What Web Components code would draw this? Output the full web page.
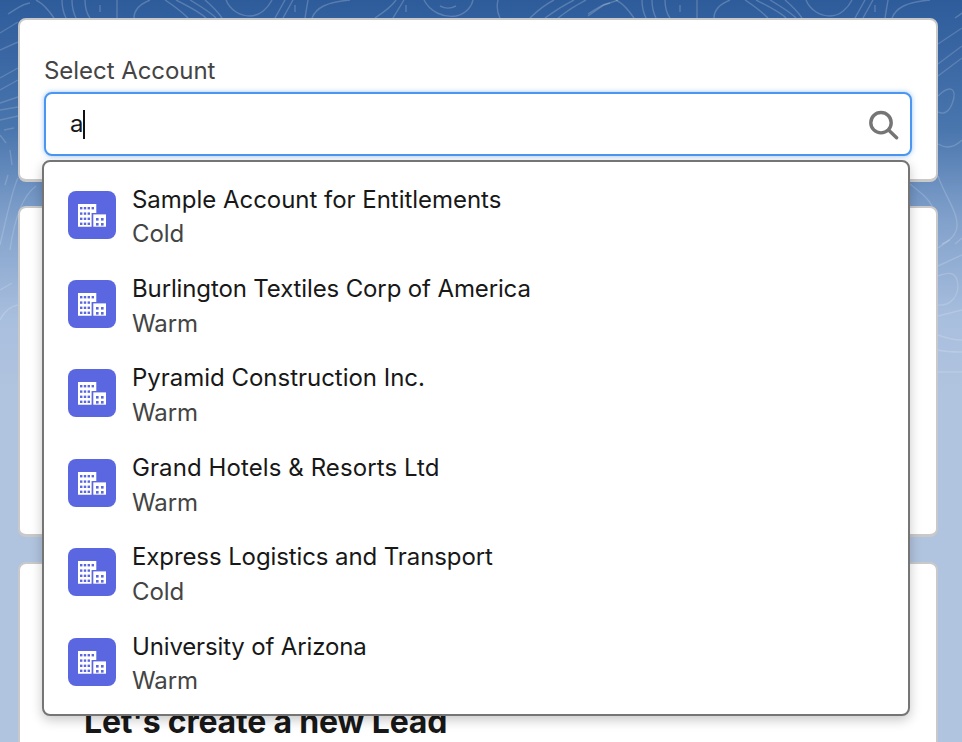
<!DOCTYPE html>
<html lang="en">
<head>
<meta charset="utf-8">
<title>Select Account</title>
<style>
  html, body { margin: 0; height: 100%; overflow: hidden; }
  body { font-family: Inter, "Liberation Sans", sans-serif; }
</style>
</head>
<body>
<app-page>
  <form-card style="height:159px">
    <account-lookup label="Select Account" value="a">
      <account-option style="--track:-.03px" name="Sample Account for Entitlements" rating="Cold"></account-option>
      <account-option style="--track:-.13px" name="Burlington Textiles Corp of America" rating="Warm"></account-option>
      <account-option style="--track:-.02px" name="Pyramid Construction Inc." rating="Warm"></account-option>
      <account-option style="--track:.09px" name="Grand Hotels &amp; Resorts Ltd" rating="Warm"></account-option>
      <account-option style="--track:-.1px" name="Express Logistics and Transport" rating="Cold"></account-option>
      <account-option style="--track:-.15px" name="University of Arizona" rating="Warm"></account-option>
    </account-lookup>
  </form-card>
  <form-card style="height:326px"></form-card>
  <form-card style="height:200px;margin-top:1px">
    <lead-heading>Let's create a new Lead</lead-heading>
  </form-card>
</app-page>

<script>
// fondo de la pagina con lineas de contorno
class AppPage extends HTMLElement {
  constructor() {
    super();
    this.attachShadow({ mode: 'open' });
    this.shadowRoot.innerHTML = `
      <style>
        :host {
          display: block;
          position: relative;
          height: 742px;
          overflow: hidden;
          background: linear-gradient(180deg, #2e5c9b 0, #4a76ae 130px, #7f9fca 215px, #a9bfde 320px, #b1c4df 400px);
        }
        .lines { position: absolute; left: 0; top: 0; }
        .stack {
          position: relative;
          display: flex;
          flex-direction: column;
          gap: 24px;
          padding: 18px 24px 0 18px;
        }
      </style>
      <svg class="lines" width="962" height="420" viewBox="0 0 962 420" fill="none" stroke="#fff" stroke-opacity=".2" stroke-width="1.4">
        <defs>
          <g id="tile">
            <path d="M8 14C18 8 22 4 30 3"/>
            <path d="M36 0C44 4 50 12 54 18"/>
            <path d="M62 0C62 8 64 14 66 18"/>
            <path d="M72 0C72 8 74 14 76 18"/>
            <path d="M85 0C85 8 87 14 90 18"/>
            <path d="M100 5V12"/>
            <path d="M117 0V18"/>
            <path d="M134 18C134 10 140 4 150 0"/>
            <path d="M165 0C174 6 182 12 188 18"/>
            <path d="M176 0C188 6 200 12 206 18"/>
            <path d="M190 0C200 6 210 12 216 18"/>
            <path d="M205 0C212 6 218 12 222 18"/>
            <path d="M226 0C230 10 240 16 250 16 260 16 268 8 272 0"/>
            <path d="M275 18L285 0"/>
            <path d="M283 18L293 0"/>
            <path d="M295 5V12"/>
            <path d="M305 18L308 0"/>
            <path d="M312 18C316 8 326 2 350 0"/>
            <path d="M375 18C384 12 392 6 396 0"/>
            <path d="M393 18L404 0"/>
            <path d="M406 5V12"/>
            <path d="M424 0C430 12 444 18 456 16 466 14 472 6 473 0"/>
            <path d="M440 6C446 9 450 9 456 6"/>
            <path d="M498 0C496 8 498 14 500 18"/>
            <path d="M530 18C538 10 546 4 554 0"/>
            <path d="M545 18C556 10 566 4 574 0"/>
            <path d="M558 18C568 10 578 4 586 0"/>
            <path d="M588 16L604 5 618 0"/>
          </g>
        </defs>
        <use href="#tile"/>
        <use href="#tile" x="580"/>
        <g stroke-opacity=".17">
          <path d="M0 33L18 22"/>
          <path d="M0 50L18 42"/>
          <path d="M0 78L18 68"/>
          <path d="M0 90L18 80"/>
          <path d="M0 103L18 97"/>
          <path d="M0 110L18 107"/>
          <path d="M0 120L18 116"/>
          <path d="M4 130L14 128"/>
          <path d="M0 135L6 143"/>
          <path d="M10 150L12 165"/>
          <path d="M5 185L8 175"/>
          <path d="M0 245C6 220 12 190 18 178"/>
          <path d="M10 250C14 222 22 196 36 186"/>
          <path d="M0 290L12 283"/>
          <path d="M0 320C4 312 10 306 18 305"/>
          <path d="M938 44L962 28"/>
          <path d="M938 64L962 46"/>
          <path d="M938 76L962 58"/>
          <path d="M938 96C950 84 958 88 952 104 948 114 942 114 938 112"/>
          <path d="M938 144C948 150 956 146 962 140"/>
          <path d="M938 176C944 194 958 212 957 226 956 238 946 242 938 248"/>
          <path d="M942 244L950 240"/>
          <path d="M955 244L962 238"/>
          <path d="M938 266L962 255"/>
          <path d="M938 276C948 272 958 270 958 288 956 300 948 306 938 305"/>
          <path d="M938 316L962 310"/>
          <path d="M938 335C946 338 954 340 962 340"/>
          <path d="M938 350C946 352 954 352 962 352"/>
          <path d="M938 372C946 372 954 372 962 372"/>
          <path d="M910 184C920 192 928 198 932 206"/>
        </g>
      </svg>
      <div class="stack"><slot></slot></div>
    `;
  }
}

class FormCard extends HTMLElement {
  constructor() {
    super();
    this.attachShadow({ mode: 'open' });
    this.shadowRoot.innerHTML = `
      <style>
        :host {
          display: block;
          position: relative;
          box-sizing: content-box;
          background: #fff;
          border: 2px solid #c9c9c9;
          border-bottom-width: 3px;
          border-radius: 8px;
        }
      </style>
      <slot></slot>
    `;
  }
}

class AccountLookup extends HTMLElement {
  constructor() {
    super();
    this.attachShadow({ mode: 'open' });
  }

  connectedCallback() {
    const label = this.getAttribute('label') || '';
    const value = this.getAttribute('value') || '';
    this.shadowRoot.innerHTML = `
      <style>
        :host {
          display: block;
          padding: 36px 24px 0;
          color: #181818;
        }
        label {
          display: block;
          font-size: 24px;
          line-height: 30px;
          letter-spacing: -.05px;
          color: #444;
          margin-bottom: 6px;
        }
        .box {
          display: flex;
          align-items: center;
          justify-content: space-between;
          box-sizing: border-box;
          height: 64px;
          padding: 0 10px 0 24px;
          border: 2px solid #4a96f0;
          border-radius: 8px;
          box-shadow: 0 0 5px rgba(74,150,240,.55);
          background: #fff;
        }
        .value { font-size: 24px; line-height: 34px; display: flex; align-items: center; }
        .caret { display: inline-block; width: 2px; height: 29px; background: #111; }
        .menu {
          position: absolute;
          z-index: 2;
          left: 22px;
          top: 140px;
          width: 868px;
          height: 556px;
          box-sizing: border-box;
          padding: 14.65px 0 0;
          background: #fff;
          border: 2px solid #757575;
          border-radius: 8px;
          box-shadow: 0 4px 12px rgba(0,0,0,.22);
        }
      </style>
      <label>${label}</label>
      <div class="box">
        <span class="value">${value}<i class="caret"></i></span>
        <svg width="32" height="32" viewBox="0 0 32 32" fill="none" stroke="#757575" stroke-width="3.4" stroke-linecap="round">
          <circle cx="13" cy="14.7" r="10.2"/>
          <path d="M20.8 22.2 L28.6 29.8"/>
        </svg>
      </div>
      <div class="menu"><slot></slot></div>
    `;
  }
}

class AccountOption extends HTMLElement {
  constructor() {
    super();
    this.attachShadow({ mode: 'open' });
  }

  connectedCallback() {
    const name = this.getAttribute('name') || '';
    const rating = this.getAttribute('rating') || '';
    // las ventanas del edificio se generan para no repetir rects a mano
    let dots = '';
    [16, 21.4, 26.6, 31.6].forEach((y) => {
      [12, 15.8, 19.6].forEach((x) => {
        dots += `<rect x="${x}" y="${y}" width="2.4" height="2.4"/>`;
      });
    });
    dots += '<rect x="23.6" y="16" width="2.4" height="2.4"/>';
    [27, 32].forEach((y) => {
      [28, 33].forEach((x) => {
        dots += `<rect x="${x}" y="${y}" width="2.6" height="2.6"/>`;
      });
    });
    this.shadowRoot.innerHTML = `
      <style>
        :host {
          display: flex;
          gap: 16px;
          align-items: flex-start;
          height: 89.4px;
          padding: 0 24px;
        }
        .icon {
          flex: none;
          width: 48px;
          height: 48px;
          margin-top: 14px;
          border-radius: 8px;
          background: #5a67e0;
        }
        .name, .rating {
          font-size: 24px;
          line-height: 34px;
        }
        .name { color: #181818; margin-top: 6px; letter-spacing: var(--track, -.1px); }
        .rating { color: #444; margin-top: .7px; letter-spacing: -.1px; }
      </style>
      <svg class="icon" viewBox="0 0 48 48">
        <path fill="#fff" d="M10 13H28.3V22H23.6V35.7H10Z"/>
        <rect fill="#fff" x="25.3" y="23.4" width="12.7" height="12.3"/>
        <g fill="#5a67e0">${dots}</g>
      </svg>
      <div>
        <div class="name">${name}</div>
        <div class="rating">${rating}</div>
      </div>
    `;
  }
}

class LeadHeading extends HTMLElement {
  constructor() {
    super();
    this.attachShadow({ mode: 'open' });
    this.shadowRoot.innerHTML = `
      <style>
        :host {
          display: block;
          padding: 138px 0 0 64px;
          font-size: 32px;
          line-height: 40px;
          font-weight: 700;
          letter-spacing: -.2px;
          color: #181818;
        }
      </style>
      <slot></slot>
    `;
  }
}

customElements.define('app-page', AppPage);
customElements.define('form-card', FormCard);
customElements.define('account-lookup', AccountLookup);
customElements.define('account-option', AccountOption);
customElements.define('lead-heading', LeadHeading);
</script>
</body>
</html>
